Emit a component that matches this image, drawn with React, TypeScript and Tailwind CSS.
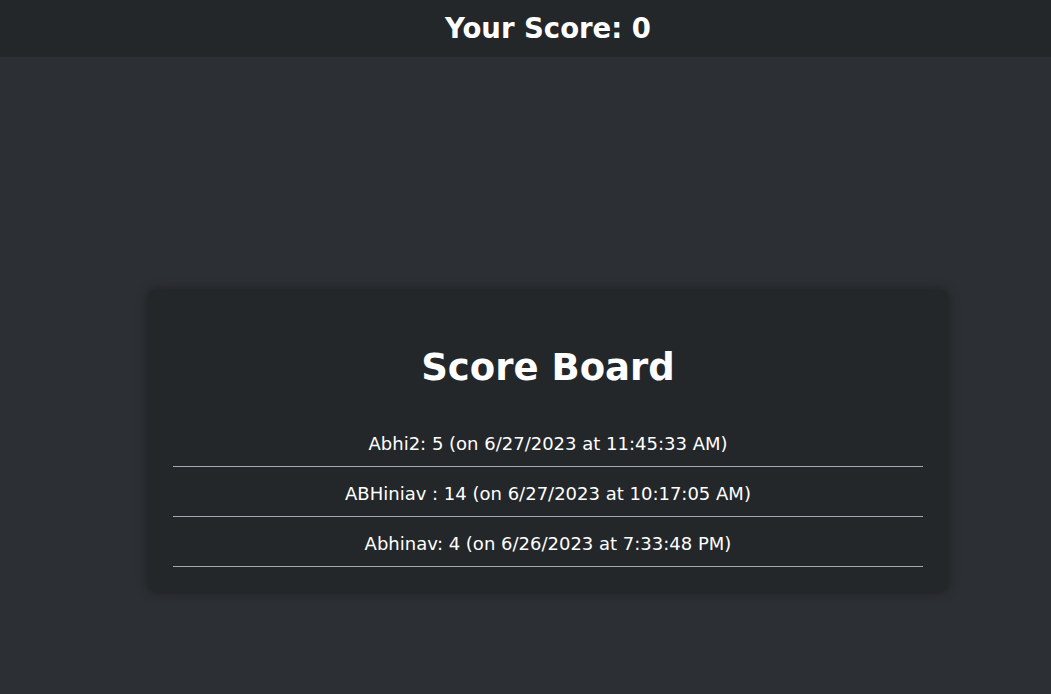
import React from 'react';

const scores = [
  { name: 'Abhi2', score: 5, date: '6/27/2023', time: '11:45:33 AM' },
  { name: 'ABHiniav ', score: 14, date: '6/27/2023', time: '10:17:05 AM' },
  { name: 'Abhinav', score: 4, date: '6/26/2023', time: '7:33:48 PM' },
];

const App: React.FC = () => {
  return (
    <div className="w-[1096px] min-h-[694px] bg-[#2c2f33] text-white font-['DejaVu_Sans',sans-serif]">
      <header className="h-[57px] bg-[#23272a] flex items-center justify-center">
        <h2 className="text-[27.5px] font-bold leading-none">Your Score: 0</h2>
      </header>

      <div className="pt-[233px] flex justify-center">
        <div className="w-[800px] bg-[#23272a] rounded-lg px-[25px] pt-[25px] pb-[25px] shadow-[0_0_12px_rgba(0,0,0,0.35)]">
          <h1 className="mt-[29px] mb-[25px] text-[37px] leading-[48px] font-bold text-center">Score Board</h1>
          <ul>
            {scores.map((s) => (
              <li
                key={s.name + s.time}
                className="h-[50px] pt-[3px] flex items-center justify-center border-b border-[#a3aab0] text-[18px]"
              >
                {s.name}: {s.score} (on {s.date} at {s.time})
              </li>
            ))}
          </ul>
        </div>
      </div>
    </div>
  );
};

export default App;
